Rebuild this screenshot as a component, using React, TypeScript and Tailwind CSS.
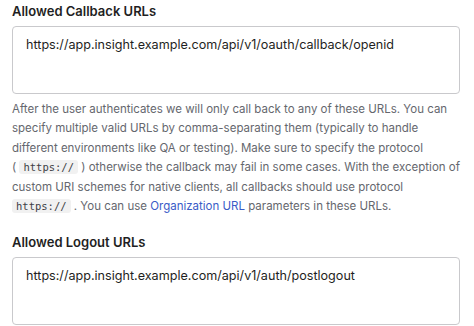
const code = "rounded-[3px] bg-[#f1f1f1] px-[4px] py-[1px] font-['DejaVu_Sans_Mono',monospace] text-[10.5px] leading-[14px] text-[#3f3f46]";

function UrlField({ label, value }: { label: string; value: string }) {
  return (
    <div>
      <div className="text-[13px] font-semibold leading-[20px] text-[#1f1f23]">{label}</div>
      <div className="mt-[5px] h-[68px] rounded-[4px] border border-[#c9c9cc] px-[13px] pt-[8px] text-[12.6px] leading-[20px] text-[#1f1f23]">
        {value}
      </div>
    </div>
  );
}

export default function App() {
  return (
    <div className="h-[326px] w-[474px] overflow-hidden bg-white pl-[12px] pr-[14px] pt-[1px] font-['Inter',sans-serif]">
      <UrlField label="Allowed Callback URLs" value="https://app.insight.example.com/api/v1/oauth/callback/openid" />
      <p className="mt-[6px] text-[11.5px] leading-[19.4px] text-[#65676e]">
        After the user authenticates we will only call back to any of these URLs. You can specify multiple valid URLs by
        comma-separating them (typically to handle different environments like QA or testing). Make sure to specify the
        protocol (&nbsp;<span className={code}>https://</span>&nbsp;) otherwise the callback may fail in some cases. With
        the exception of custom URI schemes for native clients, all callbacks should use protocol{" "}
        <span className={code}>https://</span>&nbsp;. You can use{" "}
        <a className="text-[#3a5bc7]">Organization URL</a> parameters in these URLs.
      </p>
      <div className="mt-[16px]">
        <UrlField label="Allowed Logout URLs" value="https://app.insight.example.com/api/v1/auth/postlogout" />
      </div>
    </div>
  );
}
